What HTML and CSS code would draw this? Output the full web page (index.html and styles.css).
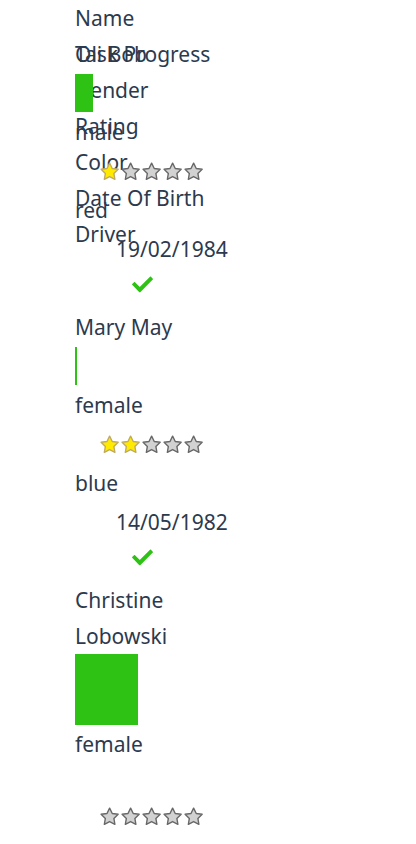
FILE: index.html
```html
<!DOCTYPE html>
<html>
<head>
<meta charset="utf-8">
<link rel="stylesheet" href="styles.css">
</head>
<body>
<div class="table">
  <div class="header">
    <div class="col-title">Name</div>
    <div class="col-title">Task Progress</div>
    <div class="col-title">Gender</div>
    <div class="col-title">Rating</div>
    <div class="col-title">Color</div>
    <div class="col-title">Date Of Birth</div>
    <div class="col-title">Driver</div>
  </div>
  <div class="body">
    <div class="row">
      <div class="cell text">Oli Bob</div>
      <div class="cell progress"><div class="bar" style="width:18px"></div></div>
      <div class="cell text">male</div>
      <div class="cell stars">
        <svg class="star" viewBox="0 0 512 512"><polygon class="on" points="259.216,29.942 330.27,173.919 489.16,197.007 374.185,309.08 401.33,467.31 259.216,392.612 117.104,467.31 144.25,309.08 29.274,197.007 188.165,173.919"/></svg><svg class="star" viewBox="0 0 512 512"><polygon class="off" points="259.216,29.942 330.27,173.919 489.16,197.007 374.185,309.08 401.33,467.31 259.216,392.612 117.104,467.31 144.25,309.08 29.274,197.007 188.165,173.919"/></svg><svg class="star" viewBox="0 0 512 512"><polygon class="off" points="259.216,29.942 330.27,173.919 489.16,197.007 374.185,309.08 401.33,467.31 259.216,392.612 117.104,467.31 144.25,309.08 29.274,197.007 188.165,173.919"/></svg><svg class="star" viewBox="0 0 512 512"><polygon class="off" points="259.216,29.942 330.27,173.919 489.16,197.007 374.185,309.08 401.33,467.31 259.216,392.612 117.104,467.31 144.25,309.08 29.274,197.007 188.165,173.919"/></svg><svg class="star" viewBox="0 0 512 512"><polygon class="off" points="259.216,29.942 330.27,173.919 489.16,197.007 374.185,309.08 401.33,467.31 259.216,392.612 117.104,467.31 144.25,309.08 29.274,197.007 188.165,173.919"/></svg>
      </div>
      <div class="cell text">red</div>
      <div class="cell date">19/02/1984</div>
      <div class="cell tick"><svg class="check" viewBox="0 0 24 24"><path fill="#2DC214" fill-rule="evenodd" d="M21.652,3.211c-0.293-0.295-0.77-0.295-1.061,0L9.41,14.34c-0.293,0.297-0.771,0.297-1.062,0L3.449,9.351C3.304,9.203,3.114,9.13,2.923,9.129C2.73,9.128,2.534,9.201,2.387,9.351l-2.165,1.946C0.078,11.445,0,11.630,0,11.823c0,0.194,0.078,0.397,0.223,0.544l4.94,5.184c0.292,0.296,0.771,0.776,1.062,1.07l2.124,2.141c0.292,0.293,0.769,0.293,1.062,0l14.366-14.34c0.293-0.294,0.293-0.777,0-1.071L21.652,3.211z"/></svg></div>
    </div>
    <div class="row">
      <div class="cell text">Mary May</div>
      <div class="cell progress"><div class="bar" style="width:2px"></div></div>
      <div class="cell text">female</div>
      <div class="cell stars">
        <svg class="star" viewBox="0 0 512 512"><polygon class="on" points="259.216,29.942 330.27,173.919 489.16,197.007 374.185,309.08 401.33,467.31 259.216,392.612 117.104,467.31 144.25,309.08 29.274,197.007 188.165,173.919"/></svg><svg class="star" viewBox="0 0 512 512"><polygon class="on" points="259.216,29.942 330.27,173.919 489.16,197.007 374.185,309.08 401.33,467.31 259.216,392.612 117.104,467.31 144.25,309.08 29.274,197.007 188.165,173.919"/></svg><svg class="star" viewBox="0 0 512 512"><polygon class="off" points="259.216,29.942 330.27,173.919 489.16,197.007 374.185,309.08 401.33,467.31 259.216,392.612 117.104,467.31 144.25,309.08 29.274,197.007 188.165,173.919"/></svg><svg class="star" viewBox="0 0 512 512"><polygon class="off" points="259.216,29.942 330.27,173.919 489.16,197.007 374.185,309.08 401.33,467.31 259.216,392.612 117.104,467.31 144.25,309.08 29.274,197.007 188.165,173.919"/></svg><svg class="star" viewBox="0 0 512 512"><polygon class="off" points="259.216,29.942 330.27,173.919 489.16,197.007 374.185,309.08 401.33,467.31 259.216,392.612 117.104,467.31 144.25,309.08 29.274,197.007 188.165,173.919"/></svg>
      </div>
      <div class="cell text">blue</div>
      <div class="cell date">14/05/1982</div>
      <div class="cell tick"><svg class="check" viewBox="0 0 24 24"><path fill="#2DC214" fill-rule="evenodd" d="M21.652,3.211c-0.293-0.295-0.77-0.295-1.061,0L9.41,14.34c-0.293,0.297-0.771,0.297-1.062,0L3.449,9.351C3.304,9.203,3.114,9.13,2.923,9.129C2.73,9.128,2.534,9.201,2.387,9.351l-2.165,1.946C0.078,11.445,0,11.630,0,11.823c0,0.194,0.078,0.397,0.223,0.544l4.94,5.184c0.292,0.296,0.771,0.776,1.062,1.07l2.124,2.141c0.292,0.293,0.769,0.293,1.062,0l14.366-14.34c0.293-0.294,0.293-0.777,0-1.071L21.652,3.211z"/></svg></div>
    </div>
    <div class="row">
      <div class="cell text">Christine Lobowski</div>
      <div class="cell progress tall"><div class="bar" style="width:63px"></div></div>
      <div class="cell text">female</div>
      <div class="cell stars tall-stars">
        <svg class="star" viewBox="0 0 512 512"><polygon class="off" points="259.216,29.942 330.27,173.919 489.16,197.007 374.185,309.08 401.33,467.31 259.216,392.612 117.104,467.31 144.25,309.08 29.274,197.007 188.165,173.919"/></svg><svg class="star" viewBox="0 0 512 512"><polygon class="off" points="259.216,29.942 330.27,173.919 489.16,197.007 374.185,309.08 401.33,467.31 259.216,392.612 117.104,467.31 144.25,309.08 29.274,197.007 188.165,173.919"/></svg><svg class="star" viewBox="0 0 512 512"><polygon class="off" points="259.216,29.942 330.27,173.919 489.16,197.007 374.185,309.08 401.33,467.31 259.216,392.612 117.104,467.31 144.25,309.08 29.274,197.007 188.165,173.919"/></svg><svg class="star" viewBox="0 0 512 512"><polygon class="off" points="259.216,29.942 330.27,173.919 489.16,197.007 374.185,309.08 401.33,467.31 259.216,392.612 117.104,467.31 144.25,309.08 29.274,197.007 188.165,173.919"/></svg><svg class="star" viewBox="0 0 512 512"><polygon class="off" points="259.216,29.942 330.27,173.919 489.16,197.007 374.185,309.08 401.33,467.31 259.216,392.612 117.104,467.31 144.25,309.08 29.274,197.007 188.165,173.919"/></svg>
      </div>
    </div>
  </div>
</div>
</body>
</html>
```
FILE: styles.css
```css
html, body {
  margin: 0;
  padding: 0;
  background: #ffffff;
}

body {
  font-family: "Noto Sans", "Open Sans", sans-serif;
  font-size: 21px;
  color: #2c3a4e;
  overflow: hidden;
}

.table {
  display: grid;
  width: 150px;
  margin-left: 75px;
}

.header,
.body {
  grid-area: 1 / 1;
}

.col-title {
  line-height: 36px;
  height: 36px;
  white-space: nowrap;
}

.body {
  padding-top: 36px;
}

.cell {
  box-sizing: border-box;
}

.text {
  line-height: 36px;
}

.progress {
  height: 42px;
  padding-top: 2px;
}

.progress .bar {
  height: 38px;
  background: #2dc214;
}

.progress.tall {
  height: 72px;
  padding-top: 0;
}

.progress.tall .bar {
  height: 71px;
}

.stars {
  height: 42px;
  display: flex;
  align-items: center;
  padding-left: 25px;
}

.stars.tall-stars {
  height: 108px;
}

.star {
  width: 19px;
  height: 19px;
  margin-right: 2px;
  flex: none;
}

.star polygon {
  stroke-width: 37.6152;
  stroke-linecap: round;
  stroke-linejoin: round;
}

.star .on {
  fill: #ffea00;
  stroke: #c1ab60;
}

.star .off {
  fill: #d2d2d2;
  stroke: #686868;
}

.date {
  height: 42px;
  line-height: 42px;
  padding-left: 41px;
  white-space: nowrap;
}

.tick {
  height: 39px;
  padding-top: 4px;
  padding-left: 57px;
}

.check {
  display: block;
  width: 21px;
  height: 21px;
}
```
